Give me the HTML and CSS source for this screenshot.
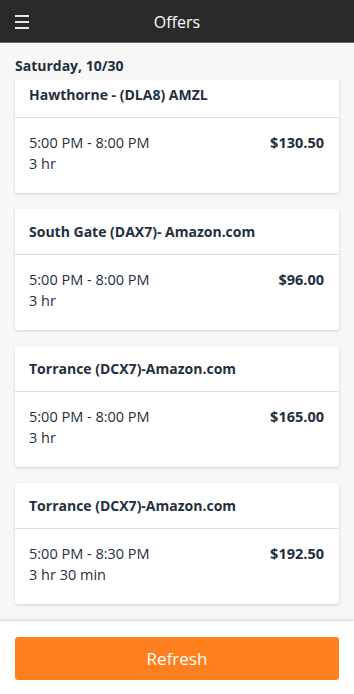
FILE: index.html
```html
<!DOCTYPE html>
<html>
<head>
<meta charset="utf-8">
<link rel="stylesheet" href="styles.css">
</head>
<body>
<div class="app">
  <header class="topbar">
    <span class="menu" aria-label="Menu">
      <svg width="16" height="14" viewBox="0 0 16 14"><path d="M1 1h14M1 7h14M1 13h14" stroke="#e6e6e6" stroke-width="1.8" fill="none"/></svg>
    </span>
    <h1 class="title">Offers</h1>
  </header>
  <div class="date">Saturday, 10/30</div>
  <main class="scroll">
    <div class="list">
      <section class="card">
        <div class="card-head">Hawthorne - (DLA8) AMZL</div>
        <div class="card-body">
          <div class="times"><div>5:00 PM - 8:00 PM</div><div>3 hr</div></div>
          <div class="price">$130.50</div>
        </div>
      </section>
      <section class="card">
        <div class="card-head">South Gate (DAX7)- Amazon.com</div>
        <div class="card-body">
          <div class="times"><div>5:00 PM - 8:00 PM</div><div>3 hr</div></div>
          <div class="price">$96.00</div>
        </div>
      </section>
      <section class="card">
        <div class="card-head">Torrance (DCX7)-Amazon.com</div>
        <div class="card-body">
          <div class="times"><div>5:00 PM - 8:00 PM</div><div>3 hr</div></div>
          <div class="price">$165.00</div>
        </div>
      </section>
      <section class="card">
        <div class="card-head">Torrance (DCX7)-Amazon.com</div>
        <div class="card-body">
          <div class="times"><div>5:00 PM - 8:30 PM</div><div>3 hr 30 min</div></div>
          <div class="price">$192.50</div>
        </div>
      </section>
      <section class="card card-stub"></section>
    </div>
  </main>
  <footer class="footer">
    <button class="refresh">Refresh</button>
  </footer>
</div>
</body>
</html>
```

FILE: styles.css
```css
* { box-sizing: border-box; }
html, body { margin: 0; padding: 0; }
body {
  font-family: "Open Sans", "Liberation Sans", sans-serif;
  color: #232f3e;
  background: #f7f7f7;
}
.app {
  width: 354px;
  height: 694px;
  display: flex;
  flex-direction: column;
  overflow: hidden;
}
.topbar {
  height: 43px;
  flex: none;
  background: #2b2a29;
  border-bottom: 1px solid #6a6a6a;
  display: flex;
  align-items: center;
  justify-content: center;
  position: relative;
  padding-top: 2px;
}
.menu {
  position: absolute;
  left: 14px;
  top: 15px;
  display: block;
  line-height: 0;
}
.title {
  margin: 0;
  font-size: 16px;
  font-weight: 500;
  color: #ffffff;
}
.date {
  flex: none;
  height: 37px;
  padding: 14px 15px 0;
  font-size: 14px;
  font-weight: 700;
  line-height: 18px;
}
.scroll {
  flex: 1;
  overflow: hidden;
  min-height: 0;
}
.list {
  margin-top: -8px;
  padding: 0 15px;
  display: flex;
  flex-direction: column;
  gap: 16px;
}
.card {
  background: #ffffff;
  border-radius: 3px;
  box-shadow: 0 1px 3px rgba(0,0,0,0.16);
}
.card-stub {
  height: 40px;
}
.card-head {
  height: 46px;
  padding: 13px 14px 0;
  font-size: 14px;
  font-weight: 700;
  line-height: 20px;
  border-bottom: 1px solid #dcdcdc;
}
.card-body {
  height: 75px;
  padding: 14px 14px 0;
  display: flex;
  justify-content: space-between;
  font-size: 14.5px;
  line-height: 21px;
}
.price {
  font-weight: 700;
  padding-right: 1px;
}
.footer {
  flex: none;
  height: 74px;
  background: #ffffff;
  border-top: 1px solid #dedede;
  box-shadow: 0 -1px 2px rgba(0,0,0,0.06);
  padding: 16px 15px 0;
  position: relative;
}
.refresh {
  display: block;
  width: 100%;
  height: 43px;
  border: none;
  border-radius: 3px;
  background: #ff7f1e;
  color: #ffffff;
  font-family: "Open Sans", "Liberation Sans", sans-serif;
  font-size: 17px;
  font-weight: 400;
  padding: 0;
}
```
